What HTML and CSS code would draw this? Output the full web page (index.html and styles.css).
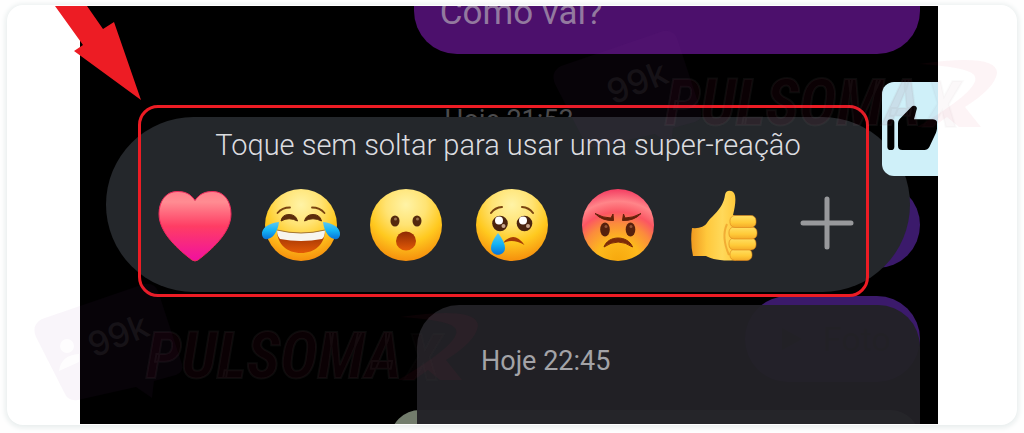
FILE: index.html
```html
<!DOCTYPE html>
<html lang="pt-BR">
<head>
  <meta charset="UTF-8" />
  <meta name="viewport" content="width=device-width, initial-scale=1.0" />
  <title>Super-reação</title>
  <link rel="stylesheet" href="styles.css">
</head>
<body>
  <main class="frame">
    <div class="phone">
      <!-- conversation -->
      <div class="chat">
        <div class="bubble greeting">Como vai?</div>
        <div class="chat-time">Hoje 21:53</div>
        <div class="bubble sent"></div>
        <div class="bubble photo">
          <svg width="22" height="26" viewBox="0 0 22 26" aria-hidden="true"><path d="M1 2 L21 13 L1 24 Z" fill="currentColor"/></svg>
          Foto
        </div>
        <div class="bubble received"></div>
      </div>

      <!-- reactions and message menu -->
      <div class="overlay">
        <section class="reactions">
          <p class="hint">Toque sem soltar para usar uma super-reação</p>
          <div class="reaction-list">
            <button class="reaction" aria-label="Coração">
              <svg viewBox="0 0 80 80">
                <defs>
                  <linearGradient id="heart" x1="0" y1="0" x2="0" y2="1">
                    <stop offset="0" stop-color="#ff7f8c"/>
                    <stop offset=".15" stop-color="#ff8c92"/>
                    <stop offset=".5" stop-color="#ff3d64"/>
                    <stop offset="1" stop-color="#f010a0"/>
                  </linearGradient>
                </defs>
                <path d="M40 15.5 C45 8 51 6.500 58 6.500 C69 6.500 76 16 76 29 C76 48 56 65 43 75 Q40 77 37 75 C24 65 4 48 4 29 C4 16 11 6.500 22 6.500 C29 6.500 35 8 40 15.500 Z" fill="url(#heart)" stroke="#ee2a5c" stroke-width="1"/>
              </svg>
            </button>
            <button class="reaction" aria-label="Chorando de rir">
              <svg viewBox="0 0 80 80">
                <defs>
                  <radialGradient id="face" cx=".5" cy=".22" r=".8">
                    <stop offset="0" stop-color="#fff3a6"/>
                    <stop offset=".35" stop-color="#ffe373"/>
                    <stop offset=".65" stop-color="#ffc91f"/>
                    <stop offset="1" stop-color="#f58a0b"/>
                  </radialGradient>
                  <linearGradient id="tear" x1="0" y1="0" x2="0" y2="1">
                    <stop offset="0" stop-color="#5cc8f2"/>
                    <stop offset=".5" stop-color="#14b4f5"/>
                    <stop offset="1" stop-color="#0873d8"/>
                  </linearGradient>
                  <linearGradient id="mouth" x1="0" y1="0" x2="0" y2="1">
                    <stop offset="0" stop-color="#8e2a04"/>
                    <stop offset="1" stop-color="#e35a06"/>
                  </linearGradient>
                </defs>
                <circle cx="40" cy="40" r="36" fill="url(#face)"/>
                <path d="M16.500 28 Q21 22.500 29 22.500 M51 22.500 Q59 22.500 63.500 28" fill="none" stroke="#7a4410" stroke-width="1.800" stroke-linecap="round"/>
                <path d="M20 36 Q21 29.500 28 29.500 Q35 29.500 36.500 36 Q28 31.500 20 36 Z M43.500 36 Q45 29.500 52 29.500 Q59 29.500 60.500 36 Q52 31.500 43.500 36 Z" fill="#5b2c0b" stroke="#5b2c0b" stroke-width="1"/>
                <path d="M16 45 Q40 51 64 45 C64 59 54 68 40 68 C26 68 16 59 16 45 Z" fill="url(#mouth)"/>
                <path d="M16 45 Q40 51 64 45 Q64 52 61 54 Q40 58 19 54 Q16 51 16 45 Z" fill="#f7f5ef"/>
                <path d="M16 45 Q40 51 64 45" fill="none" stroke="#a8792c" stroke-width="1"/>
                <path d="M18 37 C8 38 0 43 1 50 C2 56 9 55 13 50 Q17 45 18 37 Z M62 37 C72 38 80 43 79 50 C78 56 71 55 67 50 Q63 45 62 37 Z" fill="url(#tear)"/>
              </svg>
            </button>
            <button class="reaction" aria-label="Surpreso">
              <svg viewBox="0 0 80 80">
                <circle cx="40" cy="40" r="36" fill="url(#face)"/>
                <ellipse cx="29" cy="36" rx="4.500" ry="5.500" fill="#54290e"/>
                <ellipse cx="51" cy="36" rx="4.500" ry="5.500" fill="#54290e"/>
                <circle cx="29.500" cy="34" r="1.500" fill="#98704d"/>
                <circle cx="51.500" cy="34" r="1.500" fill="#98704d"/>
                <ellipse cx="40" cy="56" rx="10" ry="9.500" fill="url(#mouth)"/>
              </svg>
            </button>
            <button class="reaction" aria-label="Triste">
              <svg viewBox="0 0 80 80">
                <circle cx="40" cy="40" r="36" fill="url(#face)"/>
                <path d="M19 28 Q23 22.500 30 22 M50 22 Q57 22.500 61 28" fill="none" stroke="#7a4410" stroke-width="2" stroke-linecap="round"/>
                <circle cx="28" cy="38.500" r="7.800" fill="#4a2410"/>
                <circle cx="52.500" cy="38.500" r="7.800" fill="#4a2410"/>
                <circle cx="27" cy="35.500" r="4" fill="#fff"/>
                <circle cx="51" cy="35.500" r="4" fill="#fff"/>
                <circle cx="31.500" cy="41" r="2" fill="#c9a78f"/>
                <circle cx="56" cy="41" r="2" fill="#c9a78f"/>
                <path d="M31 58 Q42 45 52.500 60 Q41 53 31 58 Z" fill="#a43b06"/>
                <path d="M26 48 Q33 57 33 63 C33 72 19 72 19 63 Q19 57 26 48 Z" fill="url(#tear)"/>
              </svg>
            </button>
            <button class="reaction" aria-label="Bravo">
              <svg viewBox="0 0 80 80">
                <defs>
                  <radialGradient id="angry" cx=".5" cy="1" r="1">
                    <stop offset="0" stop-color="#f7a80d"/>
                    <stop offset=".3" stop-color="#fdb91c"/>
                    <stop offset=".52" stop-color="#fb8c3c"/>
                    <stop offset=".68" stop-color="#fb5663"/>
                    <stop offset=".83" stop-color="#ff8589"/>
                    <stop offset="1" stop-color="#f43d62"/>
                  </radialGradient>
                </defs>
                <circle cx="40" cy="40" r="36" fill="url(#angry)"/>
                <path d="M17 28.500 Q25 33 33 33 L35 29 L35.500 35.500 Q24 36 17 28.500 Z M63 28.500 Q55 33 47 33 L45.500 29 L44.500 35.500 Q56 36 63 28.500 Z" fill="#622109" stroke="#622109" stroke-width="1"/>
                <ellipse cx="27" cy="44.500" rx="4.800" ry="7" fill="#56200d"/>
                <ellipse cx="52.500" cy="44.500" rx="4.800" ry="7" fill="#56200d"/>
                <circle cx="28" cy="41.500" r="1.500" fill="#925338"/>
                <circle cx="53" cy="41.500" r="1.500" fill="#925338"/>
                <path d="M26 62 C30 50 50 50 54.500 62 Q40 52 26 62 Z" fill="#7d2b08" stroke="#7d2b08" stroke-width="1" stroke-linejoin="round"/>
              </svg>
            </button>
            <button class="reaction" aria-label="Curtir">
              <svg viewBox="0 0 80 80">
                <defs>
                  <linearGradient id="hand" x1="0" y1="0" x2="1" y2="0">
                    <stop offset="0" stop-color="#f09a20"/>
                    <stop offset=".3" stop-color="#ffc83c"/>
                    <stop offset=".6" stop-color="#ffd95a"/>
                    <stop offset="1" stop-color="#ffc02b"/>
                  </linearGradient>
                  <linearGradient id="finger" x1="0" y1="0" x2="0" y2="1">
                    <stop offset="0" stop-color="#ffe064"/>
                    <stop offset=".6" stop-color="#ffca38"/>
                    <stop offset="1" stop-color="#f4a928"/>
                  </linearGradient>
                </defs>
                <path d="M9 43 Q20 44 24 38 C28 31 40 25 42 10 Q43 5 48 6 C54 7 53 18 50 30 L58 34 L60 70 Q58 76 46 75.500 C32 75.500 27 73 23 71 L10 71 Q7 57 9 43 Z" fill="url(#hand)"/>
                <path d="M44 39 Q38 52 46 70" fill="none" stroke="#e79120" stroke-width="2" opacity=".6"/>
                <rect x="47" y="64" width="22" height="11.500" rx="5" fill="url(#finger)" stroke="#db8419" stroke-width=".6"/>
                <rect x="46" y="53" width="27" height="12" rx="5" fill="url(#finger)" stroke="#db8419" stroke-width=".6"/>
                <rect x="46" y="42" width="28" height="12" rx="5" fill="url(#finger)" stroke="#db8419" stroke-width=".6"/>
                <rect x="47" y="30.500" width="26" height="12" rx="5" fill="url(#finger)" stroke="#db8419" stroke-width=".6"/>
              </svg>
            </button>
            <button class="reaction" aria-label="Mais reações">
              <svg viewBox="0 0 80 80"><path d="M14 38 H62 M38 14 V62" stroke="#98999c" stroke-width="5" stroke-linecap="round"/></svg>
            </button>
          </div>
          <div class="highlight"></div>
        </section>
        <div class="menu">Hoje 22:45</div>
      </div>

      <div class="like-tab">
        <svg width="50" height="46" viewBox="0 0 150 138" role="img" aria-label="Curtir">
          <rect x="1" y="43" width="21" height="92" rx="10"/>
          <path d="M33 55 Q33 47 38 42 L73 6 Q79 0 85 3 Q91 6 89 13 L81 43 H137 Q151 43 151 57 Q151 73 147 83 L127 126 Q122 135 112 135 H46 Q33 135 33 122 Z"/>
        </svg>
      </div>
    </div>

    <svg class="arrow" width="88" height="94" viewBox="0 0 88 94" aria-hidden="true">
      <path d="M2 0 H34 L50 23 L61 16 L88 94 L21 45 L30 39 Z" fill="#ed1c24"/>
    </svg>

    <svg class="watermark top" width="460" height="130" viewBox="0 0 460 130">
      <use href="#mark"/>
      <text class="mark-count" x="66" y="76" transform="rotate(-22 66 76)">99k</text>
      <text class="mark-name" x="118" y="96">PULSOMA</text>
      <text class="mark-x" x="378" y="98">X</text>
    </svg>
    <svg class="watermark bottom" width="460" height="130" viewBox="0 0 460 130">
      <defs>
        <g id="mark">
          <path class="mark-card" d="M14 37 L116 2 Q126 0 130 9 L154 82 Q156 90 148 93 L126 99 L124 116 L108 105 L50 118 Q40 120 36 110 L8 55 Q3 43 14 37 Z"/>
          <path class="mark-swoosh" d="M372 35 Q450 24 450 44 Q448 59 418 78 L434 98 H412 L400 88 L386 98 H370 Q440 57 426 45 Q418 38 372 35 Z"/>
        </g>
      </defs>
      <use href="#mark"/>
      <circle cx="39" cy="64" r="7" class="mark-person"/>
      <path d="M31 89 Q33 73 51 72 V80 Z" class="mark-person"/>
      <text class="mark-count" x="66" y="76" transform="rotate(-22 66 76)">99k</text>
      <text class="mark-name" x="118" y="96">PULSOMA</text>
      <text class="mark-x" x="378" y="98">X</text>
    </svg>
  </main>
</body>
</html>
```
FILE: styles.css
```css
* {
  box-sizing: border-box;
}
body {
  margin: 0;
  padding: 5px 7px 9px;
  background: #fefefe;
  font-family: Roboto, "Liberation Sans", sans-serif;
}
.frame {
  position: relative;
  padding: 1px 79px 1px 73px;
  background: #fff;
  border-radius: 16px;
  box-shadow: 0 1px 5px 2px #e9eeee;
}
.phone {
  position: relative;
  display: grid;
  background: #000;
  overflow: hidden;
}
.chat,
.overlay {
  grid-area: 1 / 1;
  min-width: 0;
  display: flex;
  flex-direction: column;
}

/* conversation */
.bubble {
  align-self: flex-end;
  margin-right: 18px;
  border-radius: 43px;
  background: #3b1a6b;
}
.greeting {
  width: 59%;
  margin-top: -42px;
  padding: 29px 26px 21px;
  background: #4c106c;
  color: #93799f;
  font-size: 35px;
  line-height: 40px;
}
.chat-time {
  margin-top: 50px;
  text-align: center;
  color: #4b4b4d;
  font-size: 27px;
  line-height: 32px;
}
.sent {
  width: 240px;
  height: 86px;
  margin-top: 46px;
}
.photo {
  display: flex;
  align-items: center;
  gap: 20px;
  margin-top: 28px;
  padding: 23px 29px 23px 36px;
  color: #261c1c;
  font-size: 34px;
  line-height: 40px;
}
.received {
  align-self: stretch;
  height: 60px;
  margin: 28px 18px -46px 310px;
  background: #727c6c;
}

/* panels over the conversation */
.reactions {
  position: relative;
  margin: 111px 28px 0 26px;
  padding: 10px 34px 27px;
  background: #24272b;
  border-radius: 88px;
}
.hint {
  margin: 0;
  text-align: center;
  color: #dcdde0;
  font-size: 29px;
  font-weight: 300;
  line-height: 36px;
}
.reaction-list {
  display: grid;
  grid-template-columns: repeat(7, 1fr);
  justify-items: center;
  margin: 22px -6px 0 2px;
}
.reaction {
  padding: 0;
  border: 0;
  background: none;
  cursor: pointer;
}
.reaction svg {
  display: block;
  width: 80px;
  height: 80px;
}
.highlight {
  position: absolute;
  inset: -12px 41px -5px 32px;
  border: 3px solid #ed1c24;
  border-radius: 20px;
  pointer-events: none;
}
.menu {
  margin: 13px 18px 0 337px;
  padding: 40px 64px 47px;
  background: rgba(34, 33, 38, 0.96);
  border-radius: 42px 42px 0 0;
  color: #a3a3a7;
  font-size: 27px;
  line-height: 32px;
}
.like-tab {
  position: absolute;
  top: 76px;
  right: 0;
  padding: 23px 1px 25px 5px;
  background: #cff0f9;
  border-radius: 12px 0 0 12px;
}
.like-tab svg {
  display: block;
}

/* annotations */
.arrow {
  position: absolute;
  top: 1px;
  left: 46px;
}
.watermark {
  position: absolute;
  pointer-events: none;
}
.top {
  top: 24px;
  right: 10px;
}
.bottom {
  left: 21px;
  bottom: 13px;
}
.mark-card {
  fill: #8d3f9c;
  opacity: 0.05;
}
.mark-person {
  fill: #fff;
  opacity: 0.8;
}
.mark-count {
  fill: #808080;
  opacity: 0.12;
  font: 500 34px Inter, sans-serif;
}
.mark-name,
.mark-x {
  fill: #8d1030;
  fill-opacity: 0.08;
  stroke: #888;
  stroke-opacity: 0.08;
  stroke-width: 2px;
  font: italic bold 64px "Roboto Condensed", "Open Sans Condensed", "Liberation Sans Narrow", "Liberation Sans", sans-serif;
}
.mark-x {
  fill-opacity: 0.03;
  stroke-opacity: 0.03;
}
.mark-swoosh {
  fill: #d02045;
  opacity: 0.05;
}
```
